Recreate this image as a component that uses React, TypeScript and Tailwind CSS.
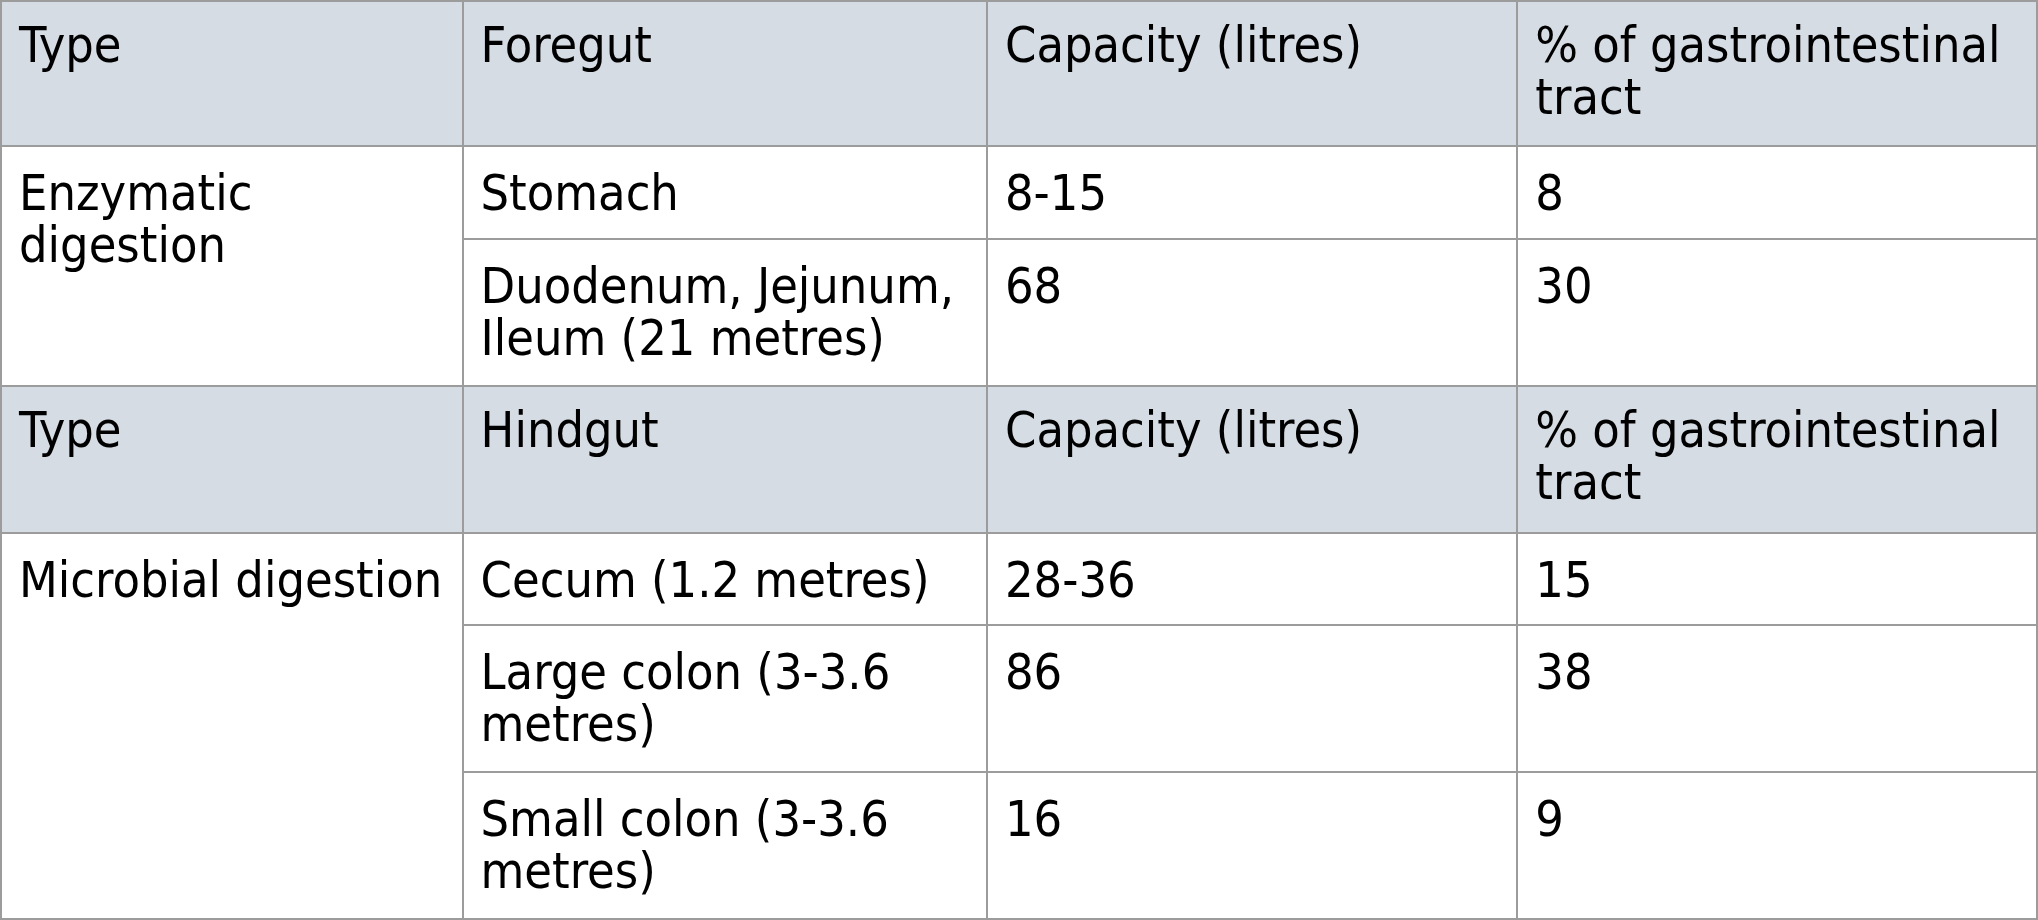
import React from "react";

const td = "border-2 border-[#9c9c9c] align-top pl-[17px] pr-[14px] pt-[20px] pb-[4px]";
const th = "border-2 border-[#9c9c9c] align-top pl-[17px] pr-[14px] pt-[17px] pb-[6px] bg-[#d6dce4] font-normal text-left";

export default function App() {
  return (
    <div className="w-[2038px] h-[920px] bg-white">
      <table
        className="w-[2038px] border-collapse text-black text-[50px] leading-[52px]"
        style={{ fontFamily: '"DejaVu Sans Condensed", "DejaVu Sans", sans-serif' }}
      >
        <colgroup>
          <col className="w-[462px]" />
          <col className="w-[525px]" />
          <col className="w-[531px]" />
          <col className="w-[520px]" />
        </colgroup>
        <tbody>
          <tr className="h-[145px]">
            <th className={th}>Type</th>
            <th className={th}>Foregut</th>
            <th className={th}>Capacity (litres)</th>
            <th className={th}>% of gastrointestinal tract</th>
          </tr>
          <tr className="h-[93px]">
            <td className={td} rowSpan={2}>Enzymatic digestion</td>
            <td className={td}>Stomach</td>
            <td className={td}>8-15</td>
            <td className={td}>8</td>
          </tr>
          <tr className="h-[147px]">
            <td className={td}>Duodenum, Jejunum, Ileum (21 metres)</td>
            <td className={td}>68</td>
            <td className={td}>30</td>
          </tr>
          <tr className="h-[147px]">
            <th className={th}>Type</th>
            <th className={th}>Hindgut</th>
            <th className={th}>Capacity (litres)</th>
            <th className={th}>% of gastrointestinal tract</th>
          </tr>
          <tr className="h-[92px]">
            <td className={td} rowSpan={3}>Microbial digestion</td>
            <td className={td}>Cecum (1.2 metres)</td>
            <td className={td}>28-36</td>
            <td className={td}>15</td>
          </tr>
          <tr className="h-[147px]">
            <td className={td}>Large colon (3-3.6 metres)</td>
            <td className={td}>86</td>
            <td className={td}>38</td>
          </tr>
          <tr className="h-[147px]">
            <td className={td}>Small colon (3-3.6 metres)</td>
            <td className={td}>16</td>
            <td className={td}>9</td>
          </tr>
        </tbody>
      </table>
    </div>
  );
}
